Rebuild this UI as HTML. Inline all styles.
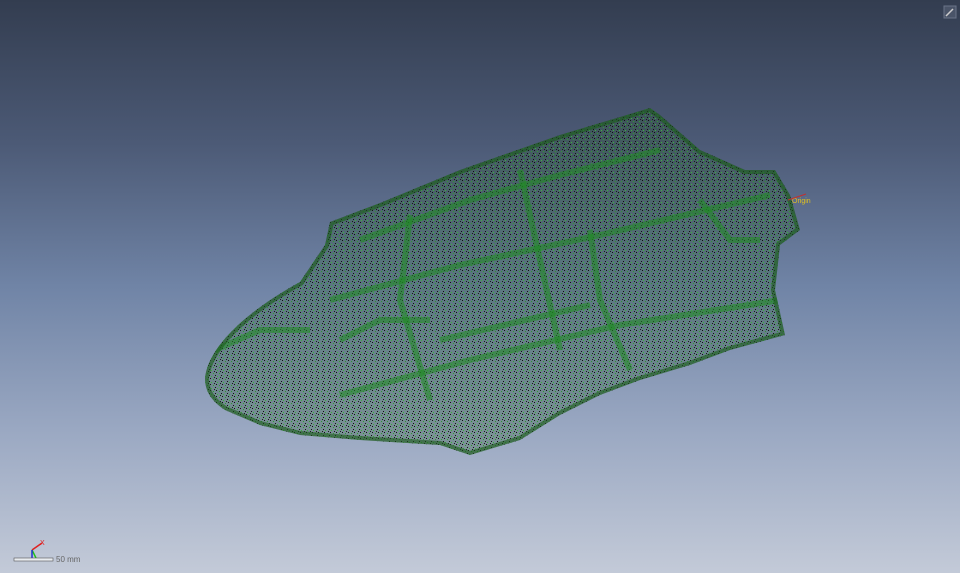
<!DOCTYPE html>
<html><head><style>
html,body{margin:0;padding:0}
body{width:960px;height:573px;overflow:hidden;position:relative;font-family:"Liberation Sans",sans-serif;
background:linear-gradient(to bottom,#333d50 0%,#4c5a76 25%,#7084a6 50%,#9aa8c2 75%,#c3cad8 100%);}
</style></head><body>
<svg width="960" height="573" style="position:absolute;left:0;top:0">
<defs>
<pattern id="dots" width="6" height="6" patternUnits="userSpaceOnUse">
<rect x="0" y="0" width="1" height="1" fill="#111"/>
<rect x="3" y="1" width="1" height="1" fill="#2f9a2f"/>
<rect x="5" y="3" width="1" height="1" fill="#111"/>
<rect x="1" y="4" width="1" height="1" fill="#3ab03a"/>
<rect x="4" y="5" width="1" height="1" fill="#1a1a1a"/>
</pattern>
<clipPath id="cl"><path d="M205,378 C208,350 240,315 300,282 L325,245 L330,222 L380,203 L460,170 L560,135 L650,108 L660,115 L700,150 L745,170 L775,170 L790,195 L800,230 L780,245 L775,290 L785,335 L730,350 L690,365 L640,380 L600,395 L560,415 L520,440 L470,455 L440,445 L360,440 L300,435 L260,425 L225,410 C210,400 205,390 205,378 Z"/></clipPath>
</defs>
<g clip-path="url(#cl)">
<rect width="960" height="573" fill="#2a5a30" fill-opacity="0.3"/>
<rect width="960" height="573" fill="url(#dots)"/>
<g stroke="#1f8a22" stroke-opacity="0.55" fill="none" stroke-width="6">
<path d="M330,300 L460,265 L600,235 L770,195"/>
<path d="M340,395 L470,360 L620,325 L780,300"/>
<path d="M360,240 L470,200 L560,175 L660,150"/>
<path d="M410,215 L400,300 L430,400"/>
<path d="M520,170 L540,260 L560,350"/>
<path d="M590,230 L600,300 L630,370"/>
<path d="M340,340 L380,320 L430,320"/>
<path d="M440,340 L590,305"/>
<path d="M700,200 L730,240 L760,240"/>
<path d="M215,350 L260,330 L310,330"/>
</g>
<path d="M205,378 C208,350 240,315 300,282 L325,245 L330,222 L380,203 L460,170 L560,135 L650,108 L660,115 L700,150 L745,170 L775,170 L790,195 L800,230 L780,245 L775,290 L785,335 L730,350 L690,365 L640,380 L600,395 L560,415 L520,440 L470,455 L440,445 L360,440 L300,435 L260,425 L225,410 C210,400 205,390 205,378 Z" fill="none" stroke="#1a5a1a" stroke-width="8" stroke-opacity="0.6"/>
</g>
<g font-size="7" fill="#e0c020"><text x="792" y="203">Origin</text></g>
<line x1="788" y1="200" x2="806" y2="194" stroke="#c03030"/>
<g>
<line x1="32" y1="550" x2="42" y2="543" stroke="#e02020" stroke-width="1.5"/>
<line x1="32" y1="550" x2="36" y2="558" stroke="#20c020" stroke-width="1.5"/>
<line x1="32" y1="550" x2="32" y2="558" stroke="#2030d0" stroke-width="1.5"/>
<text x="40" y="545" font-size="7" fill="#e02020">X</text>
<rect x="14" y="558" width="39" height="3" fill="#e8ecf0" stroke="#555" stroke-width="0.6"/>
<text x="56" y="562" font-size="8" fill="#666">50 mm</text>
</g>
<rect x="944" y="6" width="12" height="12" fill="#4a5468" stroke="#6a7488"/>
<line x1="946" y1="16" x2="953" y2="9" stroke="#ccc" stroke-width="1.5"/>
</svg>
</body></html>
